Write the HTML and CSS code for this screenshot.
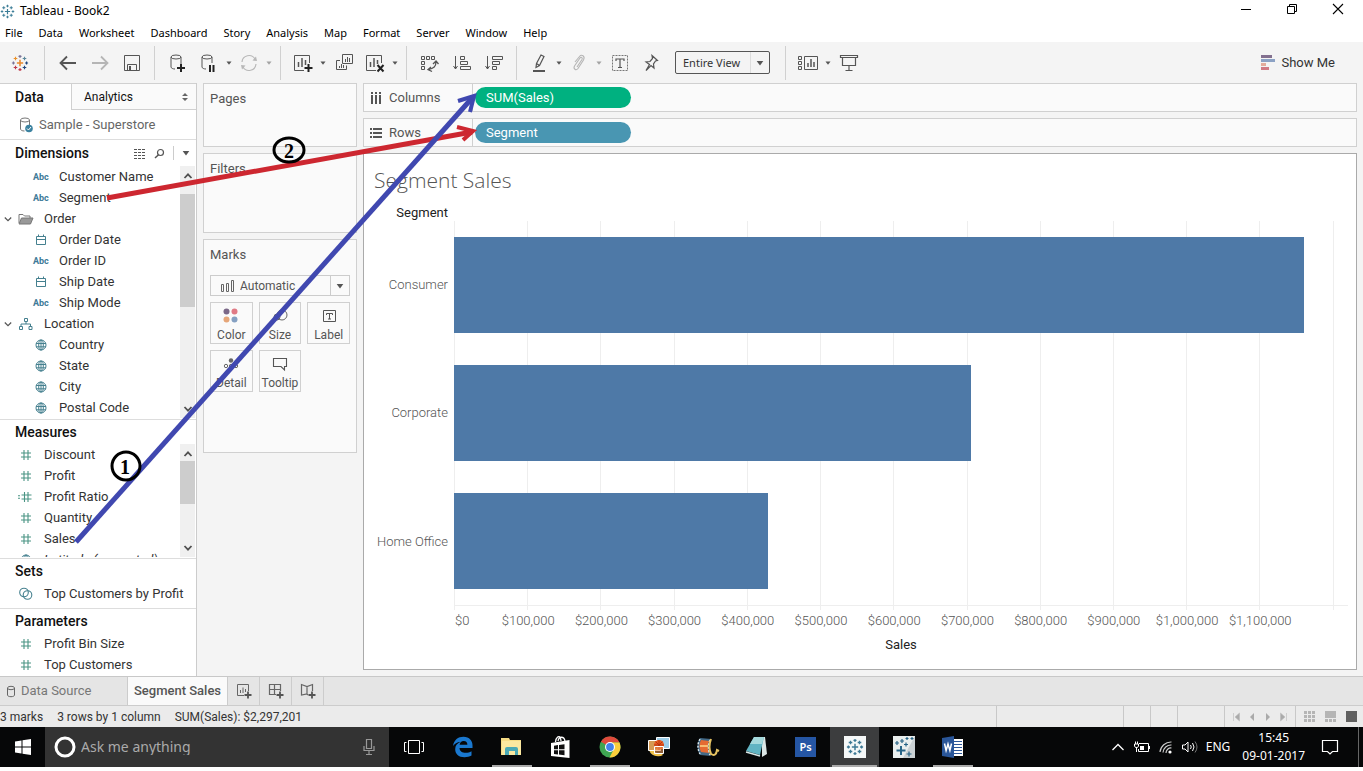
FILE: index.html
```html
<!DOCTYPE html>
<html lang="en">
<head>
    <meta charset="UTF-8">
    <meta name="viewport" content="width=device-width, initial-scale=1.0">
    <title>Tableau - Book2</title>
    <link rel="stylesheet" href="styles.css">
</head>
<body>
    <!-- shared icons -->
    <svg class="sprite" aria-hidden="true">
        <symbol id="caret" viewBox="0 0 8 8"><path d="M1.5 2.5h5L4 5.8z" fill="#555"/></symbol>
        <symbol id="hash" viewBox="0 0 16 16"><path d="M6 3v10M10 3v10M3 6h10M3 10h10" fill="none" stroke="#4a9484" stroke-width="1.1"/></symbol>
        <symbol id="calc-hash" viewBox="0 0 16 16"><path d="M6.5 3v10M10 3v10M3.5 6h10M3.5 10h10M-1 6.8h3M-1 9.2h3" fill="none" stroke="#4a9484" stroke-width="1.1"/></symbol>
        <symbol id="date" viewBox="0 0 16 16"><path d="M3.5 4.5h9v8h-9zM3.5 7.5h9M5.5 2.5v2M10.5 2.5v2" fill="none" stroke="#45808f"/></symbol>
        <symbol id="globe" viewBox="0 0 16 16"><g fill="none" stroke="#45808f"><circle cx="8" cy="8" r="5"/><ellipse cx="8" cy="8" rx="2.3" ry="5"/><path d="M8 3v10M3 6.5h10M3 9.8h10"/></g></symbol>
        <symbol id="open" viewBox="0 0 8 8"><path d="M.8 2.5L4 5.7l3.2-3.2" fill="none" stroke="#555" stroke-width="1.2"/></symbol>
        <symbol id="up" viewBox="0 0 10 10"><path d="M1.5 7L5 3.3 8.500 7" fill="none" stroke="#505050" stroke-width="1.8"/></symbol>
        <symbol id="down" viewBox="0 0 10 10"><path d="M1.5 3L5 6.700 8.500 3" fill="none" stroke="#505050" stroke-width="1.8"/></symbol>
        <symbol id="cluster" viewBox="0 0 20 20">
            <path d="M10 6.500v7M6.500 10h7" stroke-width="1.6"/>
            <path d="M10 1v3.400M8.300 2.700h3.400M10 15.600v3.400M8.300 17.300h3.400M2.700 8.300v3.400M1 10h3.400M17.300 8.300v3.400M15.600 10h3.400M5 3v4M3 5h4M15 3v4M13 5h4M5 13v4M3 15h4M15 13v4M13 15h4"/>
        </symbol>
    </svg>

    <header class="titlebar">
        <svg class="app-icon" viewBox="0 0 20 20" width="15" height="15" stroke="#3b7c96" stroke-width="1.3"><use href="#cluster"/></svg>
        <span class="app-name">Tableau - Book2</span>
        <div class="window-buttons">
            <button type="button" aria-label="Minimize"><svg width="12" height="12"><path d="M1 6.500h10" stroke="#000"/></svg></button>
            <button type="button" aria-label="Restore"><svg width="12" height="12"><path d="M1.500 3.500h7v7h-7zM3.500 3.500v-2h7v7h-2" fill="none" stroke="#000"/></svg></button>
            <button type="button" aria-label="Close"><svg width="12" height="12"><path d="M1 1l10 10M11 1L1 11" stroke="#000" stroke-width="1.100"/></svg></button>
        </div>
    </header>

    <nav class="menubar">
        <a href="#">File</a>
        <a href="#">Data</a>
        <a href="#">Worksheet</a>
        <a href="#">Dashboard</a>
        <a href="#">Story</a>
        <a href="#">Analysis</a>
        <a href="#">Map</a>
        <a href="#">Format</a>
        <a href="#">Server</a>
        <a href="#">Window</a>
        <a href="#">Help</a>
    </nav>

    <div class="toolbar">
        <div class="tool-group home">
            <button type="button" class="tool" aria-label="Start page">
                <svg width="18" height="18" viewBox="0 0 20 20" stroke-width="1.300">
                    <path d="M10 6.500v7M6.500 10h7" stroke="#e8862b" stroke-width="1.700"/>
                    <path d="M10 1v3.400M8.300 2.700h3.400M2.700 8.300v3.400M1 10h3.400" stroke="#7b7397"/>
                    <path d="M5 3v4M3 5h4" stroke="#eb912b"/>
                    <path d="M15 3v4M13 5h4" stroke="#5b879b"/>
                    <path d="M5 13v4M3 15h4M10 15.600v3.400M8.300 17.300h3.400" stroke="#c03a4b"/>
                    <path d="M15 13v4M13 15h4M17.300 8.300v3.400M15.600 10h3.400" stroke="#1f447e"/>
                </svg>
            </button>
        </div>
        <div class="tool-group">
            <button type="button" class="tool" aria-label="Undo"><svg width="20" height="20"><path d="M18 10H3M9 3.500L2.500 10 9 16.500" fill="none" stroke="#555" stroke-width="1.800"/></svg></button>
            <button type="button" class="tool" aria-label="Redo"><svg width="20" height="20"><path d="M2 10h15M11 3.500l6.500 6.500-6.500 6.500" fill="none" stroke="#b5b5b5" stroke-width="1.800"/></svg></button>
            <button type="button" class="tool" aria-label="Save"><svg width="20" height="20"><path d="M2.500 2.500h15v15h-15zM5.500 17.500v-6h9v6" fill="none" stroke="#555"/><path d="M7 13h2v4H7z" fill="#555"/></svg></button>
        </div>
        <div class="tool-group">
            <button type="button" class="tool" aria-label="New data source"><svg width="20" height="20"><g fill="none" stroke="#555"><ellipse cx="8" cy="4" rx="5" ry="2"/><path d="M3 4v10c0 1.200 2 2 4 2M13 4v7"/></g><path d="M13 11v8M9 15h8" stroke="#222" stroke-width="2"/></svg></button>
            <button type="button" class="tool narrow" aria-label="Pause updates"><svg width="20" height="20"><g fill="none" stroke="#555"><ellipse cx="8" cy="4" rx="5" ry="2"/><path d="M3 4v10c0 1.200 2 2 4 2M13 4v6"/></g><path d="M11 12v7M14.500 12v7" stroke="#222" stroke-width="2"/></svg></button>
            <button type="button" class="drop" aria-label="Update options"><svg width="8" height="8"><use href="#caret"/></svg></button>
            <button type="button" class="tool narrow" aria-label="Run update"><svg width="20" height="20"><g fill="none" stroke="#b8b8b8" stroke-width="1.200"><path d="M3 9a7 7 0 0 1 13-3M17 11a7 7 0 0 1-13 3"/></g><path d="M18 8l-4.500-.5L17 3.500zM2 12l4.500.500L3 16.500z" fill="#b8b8b8"/></svg></button>
            <button type="button" class="drop faded" aria-label="Run options"><svg width="8" height="8"><use href="#caret"/></svg></button>
        </div>
        <div class="tool-group">
            <button type="button" class="tool narrow" aria-label="New worksheet"><svg width="20" height="20"><path d="M11 17.500H1.500v-15h15V10" fill="none" stroke="#555"/><path d="M5.500 9v5M9 5v9M12.500 7v5" stroke="#555" stroke-width="1.500"/><path d="M15.500 11v8M11.500 15h8" stroke="#222" stroke-width="2"/></svg></button>
            <button type="button" class="drop" aria-label="Worksheet options"><svg width="8" height="8"><use href="#caret"/></svg></button>
            <button type="button" class="tool" aria-label="Duplicate"><svg width="20" height="20"><path d="M8.500 1.500h10v9h-10zM6 7.500H2.500v9h10v-4" fill="none" stroke="#555"/><path d="M11.500 6v3M13.500 4v5M15.500 5v4M5.500 13v2M7.500 11v4M9.500 12v3" stroke="#555"/></svg></button>
            <button type="button" class="tool narrow" aria-label="Clear sheet"><svg width="20" height="20"><path d="M11 17.500H1.500v-15h15V10" fill="none" stroke="#555"/><path d="M5.500 9v5M9 5v9M12.500 7v4" stroke="#555" stroke-width="1.500"/><path d="M12.500 12l6 6.500M18.500 12l-6 6.500" stroke="#222" stroke-width="2"/></svg></button>
            <button type="button" class="drop" aria-label="Clear options"><svg width="8" height="8"><use href="#caret"/></svg></button>
        </div>
        <div class="tool-group">
            <button type="button" class="tool" aria-label="Swap rows and columns"><svg width="20" height="20"><g fill="none" stroke="#555"><path d="M1.500 3.500h3v3h-3zM6.500 3.500h3v3h-3zM11.500 3.500h3v3h-3zM1.500 8.500h3v3h-3zM1.500 13.500h3v3h-3z"/><path d="M16 8.500c0 5-2 7-8 8M13 11l3-3 2.500 3M11 14l-3 2.500 4 2" stroke-width="1.300"/></g></svg></button>
            <button type="button" class="tool" aria-label="Sort ascending"><svg width="20" height="20"><g fill="none" stroke="#555"><path d="M3.500 3v13M1.500 13l2 3 2-3M8.500 3.500h4v3h-4zM8.500 8.500h7v3h-7zM8.500 13.500h10v3h-10z"/></g></svg></button>
            <button type="button" class="tool" aria-label="Sort descending"><svg width="20" height="20"><g fill="none" stroke="#555"><path d="M3.500 3v13M1.500 13l2 3 2-3M8.500 3.500h10v3h-10zM8.500 8.500h7v3h-7zM8.500 13.500h4v3h-4z"/></g></svg></button>
        </div>
        <div class="tool-group">
            <button type="button" class="tool narrow" aria-label="Highlight"><svg width="20" height="20"><path d="M12 2l3 1.500-4.500 9-3.500 2 .500-4zM7.500 10.500l3 2" fill="none" stroke="#555" stroke-width="1.200"/><path d="M4 18h12" stroke="#555" stroke-width="2"/></svg></button>
            <button type="button" class="drop" aria-label="Highlight options"><svg width="8" height="8"><use href="#caret"/></svg></button>
            <button type="button" class="tool narrow" aria-label="Group members"><svg width="20" height="20"><path d="M8 14l5-7.500c1-2-1-3-2-1.500l-5.500 8c-1.500 3 1.500 5 3.500 2.500l5.500-8.500c2-4-2-6-4-3.500L6 9" fill="none" stroke="#b5b5b5" stroke-width="1.100"/></svg></button>
            <button type="button" class="drop faded" aria-label="Group options"><svg width="8" height="8"><use href="#caret"/></svg></button>
            <button type="button" class="tool" aria-label="Show mark labels"><svg width="20" height="20"><path d="M2.500 2.500h15v15h-15z" fill="none" stroke="#777" stroke-dasharray="2 1"/><path d="M6 8V6h8v2M10 6v8M8 14.500h4" fill="none" stroke="#555" stroke-width="1.200"/></svg></button>
            <button type="button" class="tool narrow" aria-label="Fix axes"><svg width="20" height="20"><path d="M11 2.500l5.500 5-2 .500-2 3 .500 4-3-2.500-5 5 3.500-6-3.500-2.500 4-.500 2.500-3z" fill="none" stroke="#555" stroke-width="1.200"/></svg></button>
            <label class="fit">
                <select aria-label="Fit"><option>Entire View</option></select>
                <svg width="8" height="8" viewBox="1 1 6 6"><use href="#caret" width="8" height="8"/></svg>
            </label>
        </div>
        <div class="tool-group last">
            <button type="button" class="tool narrow" aria-label="Show cards"><svg width="20" height="20"><path d="M.5 3.500h3v3h-3zM.5 8.500h3v3h-3zM.5 13.500h3v3h-3zM6.500 3.500h13v13h-13z" fill="none" stroke="#555"/><path d="M10 10v4M13 6v8M16 9v5" stroke="#555" stroke-width="1.500"/></svg></button>
            <button type="button" class="drop" aria-label="Card options"><svg width="8" height="8"><use href="#caret"/></svg></button>
            <button type="button" class="tool" aria-label="Presentation mode"><svg width="20" height="20"><path d="M1.500 2.500h17v2h-17zM3.500 4.500v8h13v-8M10 12.500v5M6.500 17.500h7" fill="none" stroke="#555" stroke-width="1.200"/></svg></button>
        </div>
        <button type="button" class="show-me">
            <svg width="14" height="16"><path d="M0 0h11v3H0z" fill="#83708f"/><path d="M0 4h14v3H0z" fill="#8ca2c4"/><path d="M0 8h5v3H0z" fill="#e3ad9c"/><path d="M0 12h8v3H0z" fill="#d17b85"/></svg>
            Show Me
        </button>
    </div>

    <main class="workspace">
        <aside class="data-pane">
            <div class="pane-tabs">
                <button type="button" class="active">Data</button>
                <button type="button">Analytics <svg width="8" height="10"><path d="M1 4l3-3 3 3zM1 6l3 3 3-3z" fill="#666"/></svg></button>
            </div>
            <div class="source">
                <svg width="15" height="16"><g fill="none" stroke="#777"><ellipse cx="6" cy="3" rx="4.500" ry="2"/><path d="M1.500 3v9c0 1 1.500 2 4 2M10.500 3v5"/></g><circle cx="10" cy="11.500" r="3.800" fill="#3c82a0"/><path d="M8 11.500l1.500 1.500 2.500-3" fill="none" stroke="#fff"/></svg>
                Sample - Superstore
            </div>

            <section class="fields dimensions">
                <h2>Dimensions
                    <span class="field-tools">
                        <svg width="12" height="11"><path d="M0 1.500h12M0 4.500h12M0 7.500h12M0 10.500h12" stroke="#555" stroke-dasharray="3 1"/></svg>
                        <svg width="11" height="11"><circle cx="6.500" cy="4.500" r="3" fill="none" stroke="#555" stroke-width="1.200"/><path d="M4.500 6.700L1 10" stroke="#555" stroke-width="1.500"/></svg>
                        <svg class="split" width="9" height="14" viewBox="1 0 6 8"><use href="#caret" width="8" height="8"/></svg>
                    </span>
                </h2>
                <div class="scroller">
                    <ul>
                        <li class="child"><b class="abc">Abc</b>Customer Name</li>
                        <li class="child"><b class="abc">Abc</b>Segment</li>
                        <li class="folder"><svg width="8" height="8"><use href="#open"/></svg><svg width="16" height="12"><path d="M1 10V1.500h4l1.500 1.500H12v2" fill="none" stroke="#777"/><path d="M3.500 5H15l-2.500 6H1z" fill="#999" stroke="#777"/></svg>Order</li>
                        <li class="child"><svg width="16" height="16"><use href="#date"/></svg>Order Date</li>
                        <li class="child"><b class="abc">Abc</b>Order ID</li>
                        <li class="child"><svg width="16" height="16"><use href="#date"/></svg>Ship Date</li>
                        <li class="child"><b class="abc">Abc</b>Ship Mode</li>
                        <li class="folder"><svg width="8" height="8"><use href="#open"/></svg><svg width="16" height="12"><path d="M6.500.5h3v3h-3zM3 8V6h9.500v2M8 3.500V6M1.500 8.500h3v3h-3zM11 8.500h3v3h-3z" fill="none" stroke="#45808f"/></svg>Location</li>
                        <li class="child"><svg width="16" height="16"><use href="#globe"/></svg>Country</li>
                        <li class="child"><svg width="16" height="16"><use href="#globe"/></svg>State</li>
                        <li class="child"><svg width="16" height="16"><use href="#globe"/></svg>City</li>
                        <li class="child"><svg width="16" height="16"><use href="#globe"/></svg>Postal Code</li>
                    </ul>
                    <div class="scrollbar">
                        <svg width="10" height="10"><use href="#up"/></svg>
                        <div class="track"><i class="thumb"></i></div>
                        <svg width="10" height="10"><use href="#down"/></svg>
                    </div>
                </div>
            </section>

            <section class="fields measures">
                <h2>Measures</h2>
                <div class="scroller">
                    <ul>
                        <li><svg width="16" height="16"><use href="#hash"/></svg>Discount</li>
                        <li><svg width="16" height="16"><use href="#hash"/></svg>Profit</li>
                        <li><svg class="calc" width="16" height="16"><use href="#calc-hash"/></svg>Profit Ratio</li>
                        <li><svg width="16" height="16"><use href="#hash"/></svg>Quantity</li>
                        <li><svg width="16" height="16"><use href="#hash"/></svg>Sales</li>
                        <li><svg width="16" height="16"><use href="#globe"/></svg><em>Latitude (generated)</em></li>
                    </ul>
                    <div class="scrollbar">
                        <svg width="10" height="10"><use href="#up"/></svg>
                        <div class="track"><i class="thumb"></i></div>
                        <svg width="10" height="10"><use href="#down"/></svg>
                    </div>
                </div>
            </section>

            <section class="fields">
                <h2>Sets</h2>
                <ul>
                    <li><svg width="16" height="16"><g fill="none" stroke="#45808f" stroke-width="1.100"><circle cx="6" cy="6.500" r="4.300"/><circle cx="9.500" cy="9" r="4.300"/></g></svg>Top Customers by Profit</li>
                </ul>
            </section>

            <section class="fields">
                <h2>Parameters</h2>
                <ul>
                    <li><svg width="16" height="16"><use href="#hash"/></svg>Profit Bin Size</li>
                    <li><svg width="16" height="16"><use href="#hash"/></svg>Top Customers</li>
                </ul>
            </section>
        </aside>

        <div class="cards">
            <section class="card pages"><h3>Pages</h3></section>
            <section class="card filters"><h3>Filters</h3></section>
            <section class="card marks">
                <h3>Marks</h3>
                <label class="mark-type">
                    <svg width="15" height="12"><path d="M1.500 4.500h2v7h-2zM6.500 3.500h2v8h-2zM11.500.5h2v11h-2z" fill="none" stroke="#666"/></svg>
                    <select aria-label="Mark type"><option>Automatic</option></select>
                    <svg class="arrow" width="8" height="8" viewBox="1 1 6 6"><use href="#caret" width="8" height="8"/></svg>
                </label>
                <div class="mark-grid">
                    <button type="button"><svg width="16" height="16"><circle cx="3.500" cy="3.500" r="3" fill="#7b6888"/><circle cx="11.500" cy="3.500" r="3" fill="#e07a85"/><circle cx="3.500" cy="11.500" r="3" fill="#e6a679"/><circle cx="11.500" cy="11.500" r="3" fill="#85a0c2"/></svg>Color</button>
                    <button type="button"><svg width="16" height="16"><g fill="none" stroke="#666"><circle cx="10" cy="7" r="5"/><circle cx="5" cy="9" r="3"/></g></svg>Size</button>
                    <button type="button"><svg width="16" height="16"><path d="M2.500 2.500h12v11h-12z" fill="none" stroke="#555"/><path d="M5.500 7V5.500h6V7M8.500 5.500V11M7 11h3" fill="none" stroke="#555"/></svg>Label</button>
                    <button type="button"><svg width="16" height="16"><circle cx="8" cy="4.500" r="2.200" fill="#666"/><g fill="none" stroke="#666"><circle cx="3" cy="10" r="1.700"/><circle cx="8" cy="10" r="1.700"/><circle cx="13" cy="10" r="1.700"/></g></svg>Detail</button>
                    <button type="button"><svg width="16" height="16"><path d="M1.500 2.500h13v8h-2v3.500L9 10.500H1.500z" fill="none" stroke="#555" stroke-width="1.100"/></svg>Tooltip</button>
                </div>
            </section>
        </div>

        <div class="canvas">
            <div class="shelf">
                <span class="shelf-name"><svg width="12" height="12"><path d="M2 0v2M2 3v9M6 0v2M6 3v9M10 0v2M10 3v9" stroke="#555" stroke-width="2"/></svg>Columns</span>
                <span class="pill measure">SUM(Sales)</span>
            </div>
            <div class="shelf">
                <span class="shelf-name"><svg width="12" height="12"><path d="M0 2h2M3 2h9M0 6h2M3 6h9M0 10h2M3 10h9" stroke="#555" stroke-width="2"/></svg>Rows</span>
                <span class="pill dimension">Segment</span>
            </div>

            <section class="view">
                <h1>Segment Sales</h1>
                <div class="chart">
                    <div class="row-header">Segment</div>
                    <div class="row-labels">
                        <span>Consumer</span>
                        <span>Corporate</span>
                        <span>Home Office</span>
                    </div>
                    <div class="plot">
                        <div class="gridlines"><i></i><i></i><i></i><i></i><i></i><i></i><i></i><i></i><i></i><i></i><i></i><i></i><i></i></div>
                        <div class="band"><div class="bar" style="width: 95.1%"></div></div>
                        <div class="band"><div class="bar" style="width: 57.8%"></div></div>
                        <div class="band"><div class="bar" style="width: 35.1%"></div></div>
                    </div>
                    <div class="axis">
                        <span>$0</span>
                        <span>$100,000</span>
                        <span>$200,000</span>
                        <span>$300,000</span>
                        <span>$400,000</span>
                        <span>$500,000</span>
                        <span>$600,000</span>
                        <span>$700,000</span>
                        <span>$800,000</span>
                        <span>$900,000</span>
                        <span>$1,000,000</span>
                        <span>$1,100,000</span>
                        <span></span>
                    </div>
                    <div class="axis-title">Sales</div>
                </div>
            </section>
        </div>
    </main>

    <div class="sheet-tabs">
        <button type="button" class="data-source"><svg width="10" height="13"><g fill="none" stroke="#666"><ellipse cx="5" cy="3" rx="3.500" ry="1.700"/><path d="M1.500 3v7c0 1 1.500 1.700 3.500 1.700s3.500-.700 3.500-1.700V3"/></g></svg>Data Source</button>
        <button type="button" class="active">Segment Sales</button>
        <button type="button" class="add" aria-label="New worksheet"><svg width="16" height="16"><path d="M8 12.500H1.500v-11h11V8" fill="none" stroke="#666"/><path d="M4.500 7v3M7 4.500V10M9.500 6v3" stroke="#666"/><path d="M12 8.500v7M8.500 12h7" stroke="#555" stroke-width="1.800"/></svg></button>
        <button type="button" class="add" aria-label="New dashboard"><svg width="16" height="16"><path d="M8 11.500H1.500v-10h11V8M1.500 6.500h11M6.500 1.500v10" fill="none" stroke="#666" stroke-width="1.200"/><path d="M12 8.500v7M8.500 12h7" stroke="#555" stroke-width="1.800"/></svg></button>
        <button type="button" class="add" aria-label="New story"><svg width="16" height="16"><path d="M8 12l-1-1-5.500 1V1.500L7 3.500l5.500-2V8M7 3.500V11" fill="none" stroke="#666" stroke-width="1.200"/><path d="M12 8.500v7M8.500 12h7" stroke="#555" stroke-width="1.800"/></svg></button>
    </div>

    <div class="statusbar">
        <span>3 marks</span>
        <span>3 rows by 1 column</span>
        <span>SUM(Sales): $2,297,201</span>
        <div class="status-cells"><i class="wide"></i><i></i><i></i><i class="mid"></i></div>
        <div class="pager">
            <svg width="8" height="8"><path d="M1.500 0v8M7.500 0L3 4l4.500 4z" fill="#aaa" stroke="#bbb" stroke-width=".6"/></svg>
            <svg width="8" height="8"><path d="M6 0L2 4l4 4z" fill="#aaa"/></svg>
            <svg width="8" height="8"><path d="M2 0l4 4-4 4z" fill="#aaa"/></svg>
            <svg width="8" height="8"><path d="M6.500 0v8M.5 0L5 4 .5 8z" fill="#aaa" stroke="#bbb" stroke-width=".6"/></svg>
        </div>
        <div class="view-modes">
            <svg width="12" height="11"><path d="M0 1.500h12M0 5.500h12M0 9.500h12" stroke="#b5b5b5" stroke-width="3" stroke-dasharray="3 1"/></svg>
            <svg width="12" height="11"><path d="M0 0h11v7H0z" fill="#b5b5b5"/><path d="M0 9.500h12" stroke="#b5b5b5" stroke-width="3" stroke-dasharray="3 1"/></svg>
            <svg width="12" height="11"><path d="M0 0h11v11H0z" fill="#606060"/></svg>
        </div>
    </div>

    <footer class="taskbar">
        <button type="button" class="start" aria-label="Start"><svg width="18" height="18"><path d="M1 3.500l6.500-1v6H1zM8.500 2.300L17 1v7.500H8.500zM1 9.500h6.500v6L1 14.500zM8.500 9.500H17V17l-8.500-1.300z" fill="#fff"/></svg></button>
        <div class="search">
            <svg width="22" height="22"><circle cx="11" cy="11" r="9" fill="none" stroke="#fff" stroke-width="3"/></svg>
            <input type="text" aria-label="Search" placeholder="Ask me anything">
            <svg width="14" height="18"><path d="M4.500 1.500h5v9h-5zM2 8v4.500h10V8M7 12.500v4M4 16.500h6" fill="none" stroke="#999" stroke-width="1.200"/></svg>
        </div>
        <div class="apps">
            <button type="button" aria-label="Task view"><svg width="22" height="16"><path d="M5.500 1.500h11v13h-11zM3.500 3.500h-2v9h2M18.500 3.500h2v9h-2" fill="none" stroke="#fff"/></svg></button>
            <button type="button" aria-label="Edge"><svg width="22" height="22"><path d="M1 10C2 4 6 .8 11.500.8c6 0 9 4.200 9 8.700v2.500H7.500c.2 3.500 3 4.800 6 4.800 2.400 0 4.200-.6 6-1.600v4.300c-2 1.200-4.300 1.700-7 1.700-6 0-9.300-3.500-9.300-8C3.200 9.800 5 7.500 8.500 5.800 5 6.200 2.500 7.800 1 10zM7.600 8.800h7.800c0-2.400-1.200-3.800-3.700-3.800-2.300 0-3.800 1.600-4.100 3.800z" fill="#1a78cf"/></svg></button>
            <button type="button" class="running" aria-label="File Explorer"><svg width="22" height="20"><path d="M0 2V1h8l1 2h11v15H0z" fill="#f6dc85"/><path d="M1 4h19v14H1z" fill="#fbe8a0"/><path d="M4 18v-6q0-2 2-2h9q2 0 2 2v6h-3v-4H8v4z" fill="#4aa9b5"/></svg></button>
            <button type="button" aria-label="Store"><svg width="22" height="24"><path d="M5.500 7C6 2 9 0 10.500 3l.5 3M8 6c1-5 6-5 7 0" fill="none" stroke="#fff" stroke-width="1.300"/><path d="M1 8l18.500-3v18L1 21z" fill="#fff"/><path d="M4 10.700l4-.6v4.200H4zM9 10l5.500-.800v5H9zM4 15.200h4v4.300l-4-.400zM9 15.200h5.500v5L9 19.600z" fill="#111"/></svg></button>
            <button type="button" class="running" aria-label="Chrome"><svg width="22" height="22"><circle cx="11" cy="11" r="10.500" fill="#3fa552"/><path d="M11 11L1.900 5.700A10.500 10.500 0 0 1 20.500 6.500H11z" fill="#df4a3c"/><path d="M11 6.500h9.500A10.500 10.500 0 0 1 10.500 21.500L15 13z" fill="#fbcf3c"/><circle cx="11" cy="11" r="5" fill="#fff"/><circle cx="11" cy="11" r="3.900" fill="#4382ea"/></svg></button>
            <button type="button" aria-label="Photo Gallery"><svg width="24" height="22"><path d="M2 13a9 8 0 0 0 14 6l-2-2a7 6 0 0 1-9-5z" fill="#f1c34b"/><path d="M1.500 4.500h12v10h-12z" fill="#d59b55" stroke="#fff"/><path d="M9.500 1.500h13v11h-13z" fill="#9dcde8" stroke="#fff"/><circle cx="12" cy="9" r="5" fill="#e95b20"/><path d="M12 4v10M7 9h10M8.500 5.500l7 7M15.500 5.500l-7 7" stroke="#b83712"/><path d="M7.500 10.500h9v7h-9z" fill="#e89859" fill-opacity=".6" stroke="#fff"/></svg></button>
            <button type="button" aria-label="Movie Maker"><svg width="24" height="22"><path d="M4 2q-5 8 0 17l11 1q-4-8 0-17z" fill="#426987"/><path d="M5 4l8 1q-2 6 0 12l-8-1q-3-6 0-12z" fill="#e46a33"/><path d="M4 3q-4 7 0 15M14 4q-3 7 0 15" fill="none" stroke="#d6e5eb" stroke-dasharray="2 1.500" stroke-width="1.500"/><path d="M4 10h8" stroke="#f7bb73" stroke-width="2"/><path d="M15 3q-3 8 0 15 5 3 6-4l2 1" fill="none" stroke="#e6c362" stroke-width="2"/></svg></button>
            <button type="button" aria-label="Notepad"><svg width="24" height="22"><path d="M17 1l3 0 2 17-5 3z" fill="#dce7e6"/><path d="M9 1l10 0-4 18L1 15z" fill="#61b4c3"/><path d="M9 1l10 0-2 7L5 8z" fill="#a5d9dc"/><path d="M1 16l14 4" stroke="#dbe9e9" stroke-width="1.500"/></svg></button>
            <button type="button" aria-label="Photoshop"><span class="ps">Ps</span></button>
            <button type="button" class="running current" aria-label="Tableau"><svg width="22" height="22"><path d="M0 0h22v22H0z" fill="#f5f8f8"/><svg x="2" y="2" width="18" height="18" viewBox="0 0 20 20" stroke="#3d7995" stroke-width="1.400"><use href="#cluster"/></svg></svg></button>
            <button type="button" aria-label="Tableau Public"><svg width="24" height="24"><path d="M1 1h22v22H1z" fill="#e9eeee"/><path d="M23 1v22H11z" fill="#cbd2d5"/><g stroke="#286588"><path d="M9 11v9M4.500 15.500h9" stroke-width="2"/><path d="M5 6v4M3 8h4M10 4v4M8 6h4M14 7.500v4M12 9.500h4M17 16.500v5M14.500 19h5M15 2v3M13.500 3.500h3M20 2v3M18.500 3.500h3" stroke-width="1.200"/></g></svg></button>
            <button type="button" class="running" aria-label="Word"><svg width="24" height="22"><path d="M11 3h11v17H11z" fill="#fff"/><path d="M13 5.500h8M13 8.500h8M13 11.500h8M13 14.500h8M13 17.500h8" stroke="#2a5699"/><path d="M1 2l12-2v22L1 20z" fill="#2a5699"/><path d="M3.500 7.500l1.600 7 1.900-6.500 1.900 6.500 1.600-7" fill="none" stroke="#fff" stroke-width="1.500"/></svg></button>
        </div>
        <div class="tray">
            <svg width="14" height="10"><path d="M1.500 8L7 2.500 12.500 8" fill="none" stroke="#fff" stroke-width="1.300"/></svg>
            <svg width="18" height="14"><path d="M6 3.500h9.500v8h-10V9M16.500 6v3M1.500 4h4v2l-1 1.500h-2l-1-1.500zM2.500 4V1.500M4.500 4V1.500M3.500 7.500V12" fill="none" stroke="#fff"/><path d="M7 6h4v4H7z" fill="#fff"/></svg>
            <svg width="14" height="14"><g fill="none" stroke="#ccc" stroke-width="1.200"><path d="M1 12A11 11 0 0 1 12.500 2M4 12.500A8 8 0 0 1 12.500 5M7 13a5 5 0 0 1 5.500-5"/></g><circle cx="11" cy="12" r="1.600" fill="#fff"/></svg>
            <svg width="17" height="14"><path d="M1.500 5h2.500L7 2v10L4 9H1.500z" fill="none" stroke="#fff"/><path d="M9.500 5q1.500 2 0 4M11.500 3q3 4 0 8" fill="none" stroke="#fff"/><path d="M14 1.500q4 5.500 0 11" fill="none" stroke="#777"/></svg>
            <span>ENG</span>
            <time>15:45<br>09-01-2017</time>
            <svg class="notice" width="18" height="18"><path d="M1.500 2.500h15v11h-5l-2.500 2.500L6.500 13.500h-5z" fill="none" stroke="#fff" stroke-width="1.200"/></svg>
        </div>
    </footer>

    <!-- drag steps drawn over the workbook -->
    <svg class="steps" width="1363" height="767">
        <g fill="none" stroke="#cd2730" stroke-width="5">
            <path d="M107 198L472 132"/>
            <path d="M457 127l16 4-10 9" stroke-width="4"/>
        </g>
        <g fill="none" stroke="#4048b0" stroke-width="5">
            <path d="M76 542L473 97"/>
            <path d="M458 101l16-5-4 16" stroke-width="4"/>
        </g>
        <g fill="none" stroke="#000" stroke-width="3">
            <circle cx="126" cy="466" r="14"/>
            <ellipse cx="289" cy="150" rx="15" ry="12"/>
        </g>
        <text x="125" y="474">1</text>
        <text x="289" y="158">2</text>
    </svg>
</body>
</html>
```
FILE: styles.css
```css
* {
    box-sizing: border-box;
}
body {
    display: flex;
    flex-direction: column;
    position: relative;
    min-height: 100vh;
    margin: 0;
    padding-bottom: 4px;
    background: #fff;
    color: #333;
    font-family: Roboto, sans-serif;
    font-size: 13px;
    line-height: 16px;
}
h1, h2, h3, ul {
    margin: 0;
    padding: 0;
    font-weight: 400;
}
ul {
    list-style: none;
}
button, select, input {
    margin: 0;
    padding: 0;
    border: 0;
    background: none;
    color: inherit;
    font: inherit;
}
select {
    appearance: none;
}
svg {
    flex: none;
    overflow: visible;
}
.sprite {
    position: absolute;
    width: 0;
    height: 0;
}

/* window chrome */
.titlebar {
    display: flex;
    align-items: center;
    height: 22px;
    color: #000;
    font-family: "Noto Sans", sans-serif;
    font-size: 12px;
}
.app-name {
    margin-left: 5px;
}
.window-buttons {
    display: flex;
    margin-left: auto;
    padding-right: 2px;
}
.window-buttons button {
    width: 46px;
    height: 18px;
}
.menubar {
    display: flex;
    gap: 16px;
    height: 20px;
    padding: 3px 5px;
    font-family: "Noto Sans", sans-serif;
    font-size: 11px;
}
.menubar a {
    color: #000;
    text-decoration: none;
}

/* toolbar */
.toolbar {
    display: flex;
    align-items: center;
    height: 41px;
    background: #f4f4f4;
}
.tool-group {
    display: flex;
    align-items: center;
    height: 34px;
    padding: 0 6px 0 7px;
    border-right: 1px solid #d0d0d0;
}
.tool-group.home {
    padding: 0 8px 0 4px;
}
.tool-group.last {
    border-right: 0;
}
.tool {
    display: flex;
    justify-content: center;
    width: 32px;
}
.tool.narrow {
    width: 29px;
}
.drop {
    display: flex;
    justify-content: center;
    width: 11px;
}
.faded {
    opacity: 0.5;
}
.fit {
    display: flex;
    align-items: center;
    width: 95px;
    height: 23px;
    margin: 0 9px 0 10px;
    border: 1px solid #555;
    border-radius: 2px;
}
.fit select {
    flex: 1;
    min-width: 0;
    height: 21px;
    margin-right: 5px;
    padding-left: 7px;
    border-right: 1px solid #ddd;
    font-family: "Noto Sans", sans-serif;
    font-size: 11px;
}
.fit svg {
    margin-right: 5px;
}
.show-me {
    display: flex;
    align-items: center;
    gap: 6px;
    margin-left: auto;
    padding-right: 28px;
}

/* workspace */
.workspace {
    display: flex;
    flex: 1;
    background: #f4f4f4;
}
.data-pane {
    flex: none;
    width: 197px;
    border-right: 1px solid #ccc;
    background: #fff;
}
.pane-tabs {
    display: flex;
    height: 27px;
    border-top: 1px solid #d0d0d0;
    color: #111;
}
.pane-tabs button {
    display: flex;
    flex: 1;
    align-items: center;
    justify-content: space-between;
    padding: 0 7px 0 12px;
    border-bottom: 1px solid #d0d0d0;
    border-left: 1px solid #d0d0d0;
    background: #fafafa;
    font-size: 12px;
}
.pane-tabs .active {
    flex: none;
    width: 71px;
    padding-left: 15px;
    border: 0;
    background: #fff;
    font-size: 14px;
    font-weight: 500;
}
.source {
    display: flex;
    align-items: center;
    gap: 5px;
    height: 30px;
    padding-left: 19px;
    border-bottom: 1px solid #ddd;
    color: #666;
}
.fields {
    padding-bottom: 4px;
    border-bottom: 1px solid #ddd;
}
.fields:last-child {
    padding-bottom: 0;
    border-bottom: 0;
}
.fields h2 {
    display: flex;
    align-items: center;
    justify-content: space-between;
    height: 24px;
    padding-left: 15px;
    color: #111;
    font-size: 14px;
    font-weight: 500;
}
.fields.dimensions,
.fields.measures {
    padding-bottom: 1px;
}
.dimensions h2 {
    height: 26px;
}
.field-tools {
    display: flex;
    align-items: center;
    gap: 8px;
    padding-right: 6px;
}
.field-tools .split {
    width: 17px;
    padding-left: 8px;
    border-left: 1px solid #ccc;
}
.fields li {
    display: flex;
    align-items: center;
    gap: 10px;
    height: 21px;
    padding-left: 18px;
    white-space: nowrap;
}
.fields .child {
    padding-left: 33px;
}
.fields .folder {
    padding-left: 4px;
}
.folder svg + svg {
    margin-left: -4px;
}
.abc {
    width: 16px;
    color: #3d7b98;
    font-size: 9px;
    font-weight: 700;
}
.scroller {
    display: flex;
    justify-content: space-between;
    height: 252px;
    overflow: hidden;
}
.measures .scroller {
    height: 113px;
}
.scrollbar {
    display: flex;
    flex: none;
    flex-direction: column;
    align-items: center;
    width: 15px;
    margin-right: 1px;
    padding: 5px 0 4px;
    background: #f0f0f0;
}
.track {
    flex: 1;
    width: 15px;
    padding-top: 13px;
}
.measures .track {
    padding-top: 2px;
}
.thumb {
    display: block;
    height: 113px;
    background: #cdcdcd;
}
.measures .thumb {
    height: 43px;
}

/* cards */
.cards {
    display: flex;
    flex: none;
    flex-direction: column;
    gap: 6px;
    width: 166px;
    padding: 0 6px;
}
.card {
    height: 64px;
    padding: 7px 6px;
    border: 1px solid #d0d0d0;
    background: #fafafa;
    color: #555;
}
.card h3 {
    font-size: 13px;
}
.card.filters {
    height: 80px;
}
.card.marks {
    height: 214px;
}
.mark-type {
    display: flex;
    align-items: center;
    height: 21px;
    margin: 12px 0 6px;
    padding-left: 9px;
    border: 1px solid #ccc;
}
.mark-type select {
    flex: 1;
    min-width: 0;
    height: 19px;
    margin-right: 5px;
    padding-left: 5px;
    border-right: 1px solid #ccc;
    font-size: 12px;
}
.mark-type .arrow {
    margin-right: 5px;
}
.mark-grid {
    display: grid;
    grid-template-columns: repeat(3, 1fr);
    gap: 6px;
}
.mark-grid button {
    display: flex;
    flex-direction: column;
    align-items: center;
    justify-content: space-between;
    height: 42px;
    padding-top: 5px;
    border: 1px solid #d0d0d0;
    font-size: 12px;
}

/* shelves and view */
.canvas {
    display: flex;
    flex: 1;
    flex-direction: column;
    gap: 6px;
    min-width: 0;
    padding: 0 6px 6px 0;
}
.shelf {
    display: flex;
    align-items: center;
    height: 29px;
    border: 1px solid #d0d0d0;
    background: #fafafa;
    color: #555;
}
.shelf-name {
    display: flex;
    align-items: center;
    gap: 7px;
    width: 109px;
    height: 27px;
    padding-left: 6px;
    border-right: 1px solid #d0d0d0;
}
.pill {
    width: 156px;
    height: 21px;
    margin-left: 2px;
    padding: 3px 11px;
    border-radius: 11px;
    color: #fff;
}
.pill.measure {
    background: #00b180;
}
.pill.dimension {
    background: #4996b2;
}
.view {
    display: flex;
    flex: 1;
    flex-direction: column;
    padding: 13px 8px 14px 10px;
    border: 1px solid #aaa;
    background: #fff;
    color: #555;
    font-weight: 300;
}
.view h1 {
    font-family: "Open Sans", sans-serif;
    font-size: 21px;
    font-weight: 300;
    line-height: 26px;
}
.chart {
    display: grid;
    flex: 1;
    grid-template-columns: 80px 1fr;
    grid-template-rows: 28px 1fr 29px 20px;
}
.row-header {
    padding: 12px 6px 0 0;
    color: #222;
    font-weight: 400;
    text-align: right;
}
.row-labels {
    display: flex;
    grid-row: 2;
    flex-direction: column;
    padding-right: 6px;
    text-align: right;
    white-space: nowrap;
}
.row-labels span {
    display: flex;
    flex: 1;
    align-items: center;
    justify-content: flex-end;
}
.plot {
    display: flex;
    grid-row: 2;
    grid-column: 2;
    flex-direction: column;
    position: relative;
    border-bottom: 1px solid #eee;
}
.gridlines {
    display: flex;
    position: absolute;
    inset: 0 0 -5px;
}
.gridlines i {
    flex: 10 1 0;
    border-left: 1px solid #eee;
}
.gridlines i:last-child {
    flex-grow: 2;
}
.band {
    display: flex;
    flex: 1;
    align-items: center;
    position: relative;
}
.bar {
    height: 75%;
    background: #4e79a7;
}
.axis {
    display: flex;
    grid-row: 3;
    grid-column: 2;
    padding-top: 7px;
}
.axis span {
    display: flex;
    flex: 10 1 0;
    justify-content: center;
    min-width: 0;
}
.axis span:first-child {
    flex-grow: 5;
    justify-content: flex-start;
    padding-left: 1px;
}
.axis span:last-child {
    flex-grow: 7;
}
.axis-title {
    grid-row: 4;
    grid-column: 2;
    padding-top: 2px;
    color: #222;
    font-weight: 400;
    text-align: center;
}

/* sheet tabs and status */
.sheet-tabs {
    display: flex;
    height: 30px;
    border-top: 1px solid #c8c8c8;
    border-bottom: 1px solid #ccc;
    background: #e5e5e5;
}
.sheet-tabs button {
    display: flex;
    align-items: center;
    justify-content: center;
    border-right: 1px solid #ccc;
    color: #555;
}
.sheet-tabs .data-source {
    justify-content: flex-start;
    gap: 5px;
    width: 128px;
    padding-left: 6px;
    color: #777;
}
.sheet-tabs .active {
    width: 100px;
    background: #fafafa;
    font-weight: 500;
}
.sheet-tabs .add {
    width: 32px;
}
.statusbar {
    display: flex;
    align-items: center;
    gap: 14px;
    height: 21px;
    background: #ebebeb;
    font-size: 12px;
}
.status-cells {
    display: flex;
    height: 21px;
    margin: 0 -14px 0 auto;
}
.status-cells i {
    width: 27px;
    border-left: 1px solid #c8c8c8;
}
.status-cells .wide {
    width: 127px;
}
.status-cells .mid {
    width: 47px;
}
.pager,
.view-modes {
    display: flex;
    align-items: center;
    gap: 8px;
    height: 21px;
    border-left: 1px solid #c8c8c8;
}
.pager {
    width: 71px;
    margin-right: -14px;
    padding-left: 7px;
}
.view-modes {
    gap: 9px;
    width: 68px;
    padding-left: 8px;
}

/* windows taskbar */
.taskbar {
    display: flex;
    height: 40px;
    background: #060708;
    color: #fff;
    font-family: "Noto Sans", sans-serif;
    font-size: 12px;
}
.start {
    width: 45px;
    padding-top: 3px;
}
.search {
    display: flex;
    align-items: center;
    gap: 5px;
    width: 344px;
    padding: 0 13px 0 9px;
    background: #333;
}
.search input {
    flex: 1;
    min-width: 0;
    font-size: 14px;
}
.search input::placeholder {
    color: #aaa;
}
.apps {
    display: flex;
}
.apps button {
    display: flex;
    align-items: center;
    justify-content: center;
    width: 49px;
}
.apps .running {
    background: linear-gradient(#aaa, #aaa) center bottom / 40px 2px no-repeat;
}
.apps .current {
    background-color: #3c3d3e;
    background-size: 45px 2px;
}
.ps {
    width: 21px;
    height: 20px;
    background: #2556a4;
    font-size: 11px;
    font-weight: 600;
    line-height: 19px;
}
.tray {
    display: flex;
    align-items: center;
    gap: 8px;
    margin-left: auto;
    margin-right: 4px;
    padding-right: 19px;
    border-right: 1px solid #666;
}
.tray time {
    margin-left: 4px;
    line-height: 18px;
    text-align: center;
}
.notice {
    margin-left: 8px;
}

.steps {
    position: absolute;
    top: 0;
    left: 0;
    pointer-events: none;
}
.steps text {
    font-family: "Liberation Serif", serif;
    font-size: 20px;
    font-weight: 700;
    text-anchor: middle;
}
```
